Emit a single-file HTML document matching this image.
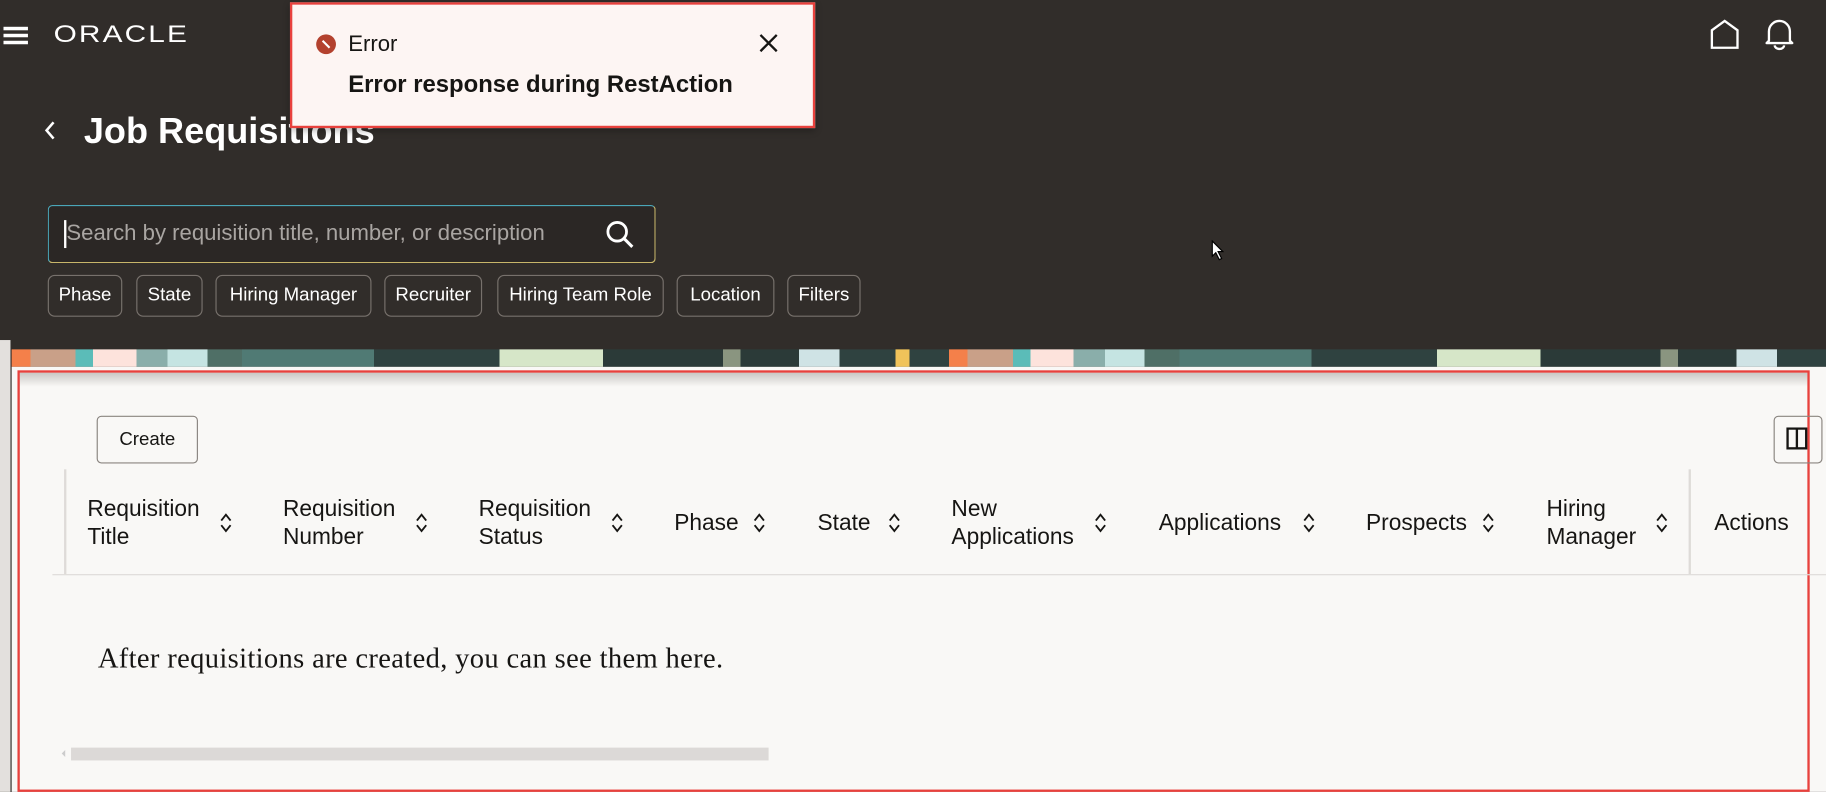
<!DOCTYPE html>
<html><head><meta charset="utf-8"><style>
html,body{margin:0;padding:0;background:#312d2a;overflow:hidden;width:1826px;height:792px}
#w{position:absolute;left:0;top:0;width:1568px;height:680px;transform:scale(1.16454);transform-origin:0 0;font-family:"Liberation Sans",sans-serif;background:#312d2a}
.a{position:absolute}
.chip{position:absolute;top:236px;height:34px;border:1px solid #77716c;border-radius:6px;color:#fff;font-size:16px;line-height:34px;text-align:center;box-sizing:content-box}
.th{position:absolute;font-size:19.5px;color:#161513;line-height:24px}
.s{position:absolute;top:439px;width:12px;height:20px}
</style></head><body><div id="w">
<div class="a" style="left:3px;top:23px;width:21px;height:2.5px;background:#fff"></div>
<div class="a" style="left:3px;top:29px;width:21px;height:2.5px;background:#fff"></div>
<div class="a" style="left:3px;top:35px;width:21px;height:2.5px;background:#fff"></div>
<div class="a" style="left:46px;top:18px;color:#fff;font-size:21px;letter-spacing:1.5px;transform:scaleX(1.22);transform-origin:0 0">ORACLE</div>
<svg class="a" style="left:1466px;top:16px" width="30" height="28" viewBox="0 0 30 28"><path d="M4 25V10L15 2L26 10V25Z" fill="none" stroke="#fff" stroke-width="2"/></svg>
<svg class="a" style="left:1514px;top:15px" width="28" height="30" viewBox="0 0 28 30"><path d="M5 20V12A9 9 0 0 1 23 12V20L25 22H3Z" fill="none" stroke="#fff" stroke-width="2" stroke-linejoin="round"/><path d="M10 24A4 3 0 0 0 18 24" fill="none" stroke="#fff" stroke-width="2"/></svg>
<svg class="a" style="left:36px;top:103px" width="14" height="18" viewBox="0 0 14 18"><path d="M10 2L4 9L10 16" fill="none" stroke="#fff" stroke-width="2.2"/></svg>
<div class="a" style="left:72px;top:95px;color:#fff;font-size:31px;font-weight:bold">Job Requisitions</div>
<div class="a" style="left:41px;top:176px;width:520px;height:48px;border:1px solid #4a9bb0;border-color:#4aa6b8 #c8b66a #c8b66a #4aa6b8;border-radius:4px;background:#2b2725"></div>
<div class="a" style="left:55px;top:189px;width:1.5px;height:24px;background:#fff"></div>
<div class="a" style="left:57px;top:190px;color:#a9a5a2;font-size:19px">Search by requisition title, number, or description</div>
<svg class="a" style="left:518px;top:187px" width="28" height="28" viewBox="0 0 28 28"><circle cx="12" cy="12" r="8" fill="none" stroke="#fff" stroke-width="2.4"/><path d="M18 18L25 25" stroke="#fff" stroke-width="2.6"/></svg>
<div class="chip" style="left:41px;width:62px">Phase</div>
<div class="chip" style="left:117px;width:55px">State</div>
<div class="chip" style="left:185px;width:132px">Hiring Manager</div>
<div class="chip" style="left:330px;width:82px">Recruiter</div>
<div class="chip" style="left:427px;width:141px">Hiring Team Role</div>
<div class="chip" style="left:581px;width:82px">Location</div>
<div class="chip" style="left:676px;width:61px">Filters</div>
<svg class="a" style="left:1040px;top:206px" width="12" height="18" viewBox="0 0 12 18"><path d="M1 1V14L4 11L7 17L9 16L6 10H10Z" fill="#fff" stroke="#000" stroke-width="1"/></svg>
<div class="a" style="left:0;top:292px;width:9px;height:388px;background:#e3e0dd"></div>
<div class="a" style="left:10px;top:300px;width:1558px;height:15px;background:repeating-linear-gradient(90deg,#f4804a 0 16px,#c9a088 16px 55px,#5bbcb8 55px 70px,#fde3dc 70px 107px,#8aaeaa 107px 134px,#c5e4e2 134px 168px,#4f6f66 168px 198px,#507a74 198px 311px,#2f4240 311px 419px,#d6e6c8 419px 508px,#2b3a38 508px 611px,#8a9580 611px 626px,#2b3a38 626px 676px,#cfe3e5 676px 711px,#2f4240 711px 759px,#f0c35a 759px 771px,#2f4240 771px 805px)"></div>
<div class="a" style="left:10px;top:315px;width:1558px;height:365px;background:#f9f8f6"></div>
<div class="a" style="left:15px;top:318px;width:1535px;height:358px;border:2px solid #e8413d;background:linear-gradient(#c9c7c4,#f9f8f6 12px,#f9f8f6)"></div>
<div class="a" style="left:249px;top:2px;width:447px;height:104px;border:2px solid #e8413d;background:#fdf5f3;box-shadow:0 2px 6px rgba(0,0,0,.3)"></div>
<svg class="a" style="left:271px;top:29px" width="18" height="18" viewBox="0 0 18 18"><circle cx="9" cy="9" r="8.5" fill="#b3412e"/><path d="M6 6L12 12" stroke="#fff" stroke-width="1.8"/></svg>
<div class="a" style="left:299px;top:28px;font-size:19px;color:#161513">Error</div>
<svg class="a" style="left:651px;top:28px" width="18" height="18" viewBox="0 0 18 18"><path d="M2 2L16 16M16 2L2 16" stroke="#161513" stroke-width="2"/></svg>
<div class="a" style="left:299px;top:61px;font-size:20.5px;font-weight:bold;color:#161513">Error response during RestAction</div>
<div class="a" style="left:83px;top:357px;width:85px;height:39px;border:1px solid #8a8580;border-radius:4px;font-size:16px;line-height:39px;text-align:center;color:#161513">Create</div>
<div class="a" style="left:1523px;top:357px;width:40px;height:39px;border:1px solid #8a8580;border-radius:4px"></div>
<svg class="a" style="left:1533px;top:367px" width="22" height="20" viewBox="0 0 22 20"><rect x="2" y="1" width="16" height="17" fill="none" stroke="#161513" stroke-width="2"/><path d="M10 1V18" stroke="#161513" stroke-width="2"/></svg>
<div class="a" style="left:55px;top:403px;width:2px;height:90px;background:#dedbd8"></div>
<div class="a" style="left:1450px;top:403px;width:2px;height:90px;background:#dedbd8"></div>
<div class="a" style="left:45px;top:493px;width:1523px;height:1px;background:#dedbd8"></div>
<div class="th" style="left:75px;top:425px">Requisition<br>Title</div>
<div class="th" style="left:243px;top:425px">Requisition<br>Number</div>
<div class="th" style="left:411px;top:425px">Requisition<br>Status</div>
<div class="th" style="left:579px;top:437px">Phase</div>
<div class="th" style="left:702px;top:437px">State</div>
<div class="th" style="left:817px;top:425px">New<br>Applications</div>
<div class="th" style="left:995px;top:437px">Applications</div>
<div class="th" style="left:1173px;top:437px">Prospects</div>
<div class="th" style="left:1328px;top:425px">Hiring<br>Manager</div>
<div class="th" style="left:1472px;top:437px">Actions</div>
<svg width="0" height="0" style="position:absolute"><defs><symbol id="so" viewBox="0 0 12 20"><path d="M2 8L6 3L10 8M2 12L6 17L10 12" fill="none" stroke="#161513" stroke-width="1.6"/></symbol></defs></svg>
<svg class="s" style="left:188px"><use href="#so"/></svg>
<svg class="s" style="left:356px"><use href="#so"/></svg>
<svg class="s" style="left:524px"><use href="#so"/></svg>
<svg class="s" style="left:646px"><use href="#so"/></svg>
<svg class="s" style="left:762px"><use href="#so"/></svg>
<svg class="s" style="left:939px"><use href="#so"/></svg>
<svg class="s" style="left:1118px"><use href="#so"/></svg>
<svg class="s" style="left:1272px"><use href="#so"/></svg>
<svg class="s" style="left:1421px"><use href="#so"/></svg>
<div class="a" style="left:84px;top:552px;font-family:'Liberation Serif',serif;font-size:24.5px;letter-spacing:0.3px;color:#161513">After requisitions are created, you can see them here.</div>
<div class="a" style="left:61px;top:642px;width:599px;height:11px;background:#dcd9d7"></div>
<div class="a" style="left:50px;top:644px;width:0;height:0;border:3.5px solid transparent;border-right-color:#ccc"></div>
</div></body></html>
